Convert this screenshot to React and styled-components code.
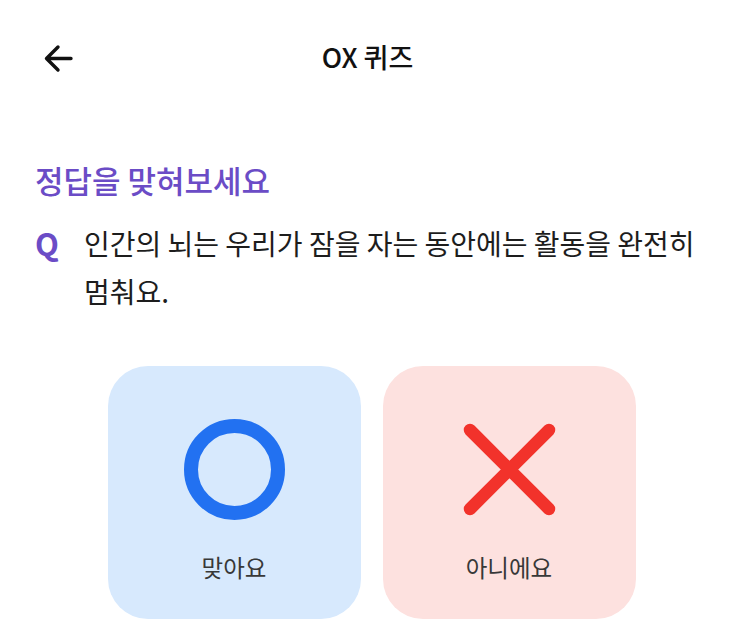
import React from 'react';
import styled, { createGlobalStyle } from 'styled-components';

const GlobalStyle = createGlobalStyle`
  html, body {
    margin: 0;
    padding: 0;
    background: #ffffff;
  }
  body {
    font-family: "Noto Sans CJK KR", "Noto Sans", sans-serif;
    color: #111111;
  }
`;

const Page = styled.div`
  width: 743px;
  height: 630px;
  overflow: hidden;
  background: #ffffff;
`;

const Header = styled.header`
  height: 116px;
  display: grid;
  grid-template-columns: 1fr auto 1fr;
  align-items: center;
  padding: 0 52px 0 44px;
`;

const BackButton = styled.button`
  width: 29px;
  height: 29px;
  padding: 0;
  border: none;
  background: none;
  display: flex;
  align-items: center;
  justify-content: center;
  justify-self: start;
  cursor: pointer;
`;

const Title = styled.h1`
  margin: 0 0 4px;
  font-size: 27px;
  font-weight: 500;
  color: #111111;
`;

const Content = styled.main`
  padding: 44px 35px 0;
`;

const Heading = styled.h2`
  margin: 0;
  font-size: 31px;
  line-height: 39px;
  font-weight: 500;
  color: #6b4cc6;
`;

const Question = styled.div`
  margin-top: 20px;
  display: flex;
`;

const QMark = styled.span`
  flex: 0 0 49px;
  font-size: 31px;
  line-height: 48px;
  font-weight: 700;
  color: #6b4cc6;
`;

const QText = styled.p`
  margin: 0;
  font-size: 28px;
  line-height: 48px;
  font-weight: 400;
  color: #1d1d1d;
  word-break: keep-all;
`;

const Choices = styled.div`
  margin-top: 51px;
  display: flex;
  justify-content: center;
  gap: 22px;
`;

const Choice = styled.button`
  width: 253px;
  height: 253px;
  border: none;
  border-radius: 40px;
  background: ${(p) => p.$bg};
  display: flex;
  flex-direction: column;
  align-items: center;
  padding: 53px 0 0;
  font-family: inherit;
  cursor: pointer;
`;

const Label = styled.span`
  margin-top: 32px;
  font-size: 23.5px;
  line-height: 30px;
  color: #383838;
`;

const ArrowIcon = () => (
  <svg width="29" height="29" viewBox="0 0 29 29" fill="none">
    <path
      d="M27 14.5H3.5M14 3L2.5 14.5L14 26"
      stroke="#111"
      strokeWidth="3.4"
      strokeLinecap="round"
      strokeLinejoin="round"
    />
  </svg>
);

const CircleIcon = () => (
  <svg width="101" height="101" viewBox="0 0 101 101">
    <circle cx="50.5" cy="50.5" r="43.5" fill="none" stroke="#2271f1" strokeWidth="14" />
  </svg>
);

const CrossIcon = () => (
  <svg width="101" height="101" viewBox="0 0 101 101">
    <path
      d="M11 11L90 90M90 11L11 90"
      stroke="#f2322b"
      strokeWidth="12.5"
      strokeLinecap="round"
    />
  </svg>
);

export default function App() {
  return (
    <Page>
      <GlobalStyle />
      <Header>
        <BackButton aria-label="뒤로">
          <ArrowIcon />
        </BackButton>
        <Title>OX 퀴즈</Title>
        <span />
      </Header>
      <Content>
        <Heading>정답을 맞혀보세요</Heading>
        <Question>
          <QMark>Q</QMark>
          <QText>인간의 뇌는 우리가 잠을 자는 동안에는 활동을 완전히 멈춰요.</QText>
        </Question>
        <Choices>
          <Choice $bg="#d7e9fd">
            <CircleIcon />
            <Label>맞아요</Label>
          </Choice>
          <Choice $bg="#fde1df">
            <CrossIcon />
            <Label>아니에요</Label>
          </Choice>
        </Choices>
      </Content>
    </Page>
  );
}
